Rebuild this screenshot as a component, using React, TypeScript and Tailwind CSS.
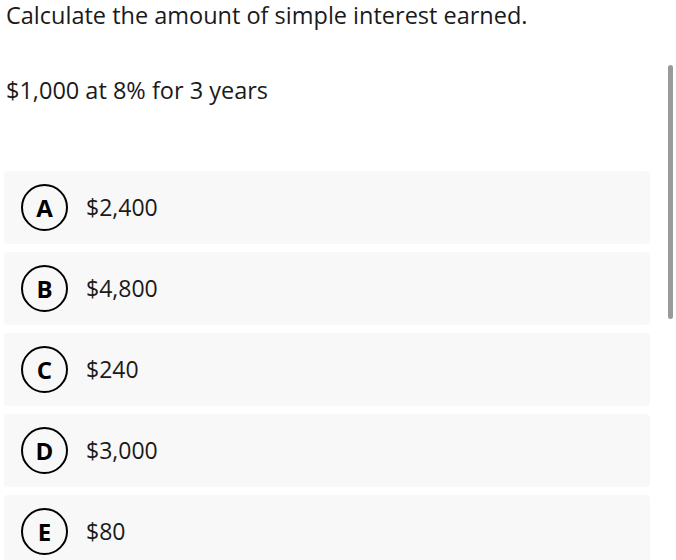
const options = [
  { letter: 'A', text: '$2,400' },
  { letter: 'B', text: '$4,800' },
  { letter: 'C', text: '$240' },
  { letter: 'D', text: '$3,000' },
  { letter: 'E', text: '$80' },
];

export default function App() {
  return (
    <div className="relative h-[560px] w-[676px] overflow-hidden bg-white text-[#1a1a1a] [font-family:'Open_Sans',sans-serif]">
      <div className="pr-[26px] pl-[4px]">
        <p className="pl-[2px] text-[23.5px] leading-[30px]">
          Calculate the amount of simple interest earned.
        </p>
        <p className="mt-[45px] pl-[2px] text-[23.5px] leading-[30px]">
          $1,000 at 8% for 3 years
        </p>
        <div className="mt-[66px] flex flex-col gap-[8px]">
          {options.map((o) => (
            <div
              key={o.letter}
              className="flex h-[73px] items-center rounded-[4px] bg-[#f8f8f8] pl-[17px]"
            >
              <div className="flex h-[47px] w-[47px] items-center justify-center rounded-full border-[2.5px] border-black text-[24px] font-bold text-black">
                {o.letter}
              </div>
              <span className="ml-[18px] text-[23px] font-medium">{o.text}</span>
            </div>
          ))}
        </div>
      </div>
      <div className="absolute top-[65px] left-[668px] h-[254px] w-[5px] rounded-full bg-[#9a9a9a]" />
    </div>
  );
}
